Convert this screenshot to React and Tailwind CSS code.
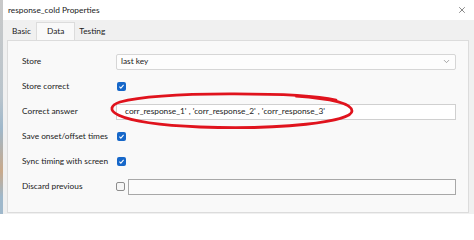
import { ChevronDown, X } from "lucide-react";

function Check({ on }) {
  if (!on) {
    return (
      <span className="block w-[9px] h-[9px] rounded-[2px] border border-[#8d8d8d] bg-[#f6f6f6]" />
    );
  }
  return (
    <span className="flex items-center justify-center w-[9px] h-[9px] rounded-[2px] bg-[#1667c9]">
      <svg width="7" height="7" viewBox="0 0 10 10">
        <path d="M2 5.2 L4.1 7.3 L8 2.8" fill="none" stroke="#fff" strokeWidth="1.5" />
      </svg>
    </span>
  );
}

function Row({ label, children }) {
  return (
    <div className="flex items-center h-[25px]">
      <div className="w-[94px] shrink-0 whitespace-nowrap">{label}</div>
      <div className="flex-1 flex items-center">{children}</div>
    </div>
  );
}

export default function App() {
  return (
    <div
      className="relative w-[474px] h-[214px] overflow-hidden flex bg-[#f0f0f0] text-[#1b1b1b]"
      style={{ fontFamily: 'Lato, "Noto Sans", sans-serif' }}
    >
      {/* strip of the window behind */}
      <div className="w-[3px] shrink-0 bg-[linear-gradient(to_bottom,#c9c9c9_0%,#b9c4cc_45%,#9fb8cb_60%,#c9a98a_80%,#9fb8cb_92%)]" />

      <div className="flex-1 flex flex-col">
        {/* title bar */}
        <div className="h-[20px] bg-white flex items-center justify-between pl-[5px] pr-[7px] text-[8.3px]">
          <span>response_cold Properties</span>
          <X size={10} strokeWidth={1.4} className="text-[#333]" />
        </div>

        {/* tabs */}
        <div className="h-[20px] flex items-end pl-[4px] text-[8.3px]">
          <div className="px-[5px] h-[18px] flex items-center">Basic</div>
          <div className="px-[10px] h-[18px] flex items-center bg-[#f9f9f9] border border-b-0 border-[#dcdcdc]">
            Data
          </div>
          <div className="px-[4px] h-[18px] flex items-center">Testing</div>
        </div>

        {/* panel */}
        <div className="flex-1 flex pl-[4px] pr-[5px] pb-[1px]">
          <div className="flex-1 bg-[#f9f9f9] border border-[#dcdcdc] pt-[8px] pl-[14px] pr-[12px] text-[8.3px]">
            <Row label="Store">
              <div className="flex-1 h-[16px] bg-[#fdfdfd] border border-[#d6d6d6] rounded-[2px] flex items-center justify-between pl-[4px] pr-[4px]">
                <span>last key</span>
                <ChevronDown size={9} className="text-[#8a8a8a]" />
              </div>
            </Row>
            <Row label="Store correct">
              <div className="pl-[1px]">
                <Check on />
              </div>
            </Row>
            <Row label="Correct answer">
              <div className="flex-1 h-[16px] bg-white border border-[#d0d0d0] flex items-center pl-[8px]">
                <span className="whitespace-nowrap">corr_response_1' , 'corr_response_2' , 'corr_response_3'</span>
              </div>
            </Row>
            <Row label="Save onset/offset times">
              <div className="pl-[1px]">
                <Check on />
              </div>
            </Row>
            <Row label="Sync timing with screen">
              <div className="pl-[1px]">
                <Check on />
              </div>
            </Row>
            <Row label="Discard previous">
              <div className="flex-1 flex items-center gap-[3px]">
                <Check on={false} />
                <div className="flex-1 h-[16px] bg-[#fbfbfb] border border-[#a8a8a8]" />
              </div>
            </Row>
          </div>
        </div>
      </div>

      {/* red ellipse drawn over the screenshot */}
      <svg className="absolute inset-0 pointer-events-none" width="474" height="214" viewBox="0 0 474 214">
        <path
          d="M336 100 C300 92 160 91 120 102 C102 108 108 123 200 127 C280 130 352 122 352 111 C352 104 336 99 296 96"
          fill="none"
          stroke="#e0131d"
          strokeWidth="2.8"
          strokeLinecap="round"
        />
      </svg>
    </div>
  );
}
